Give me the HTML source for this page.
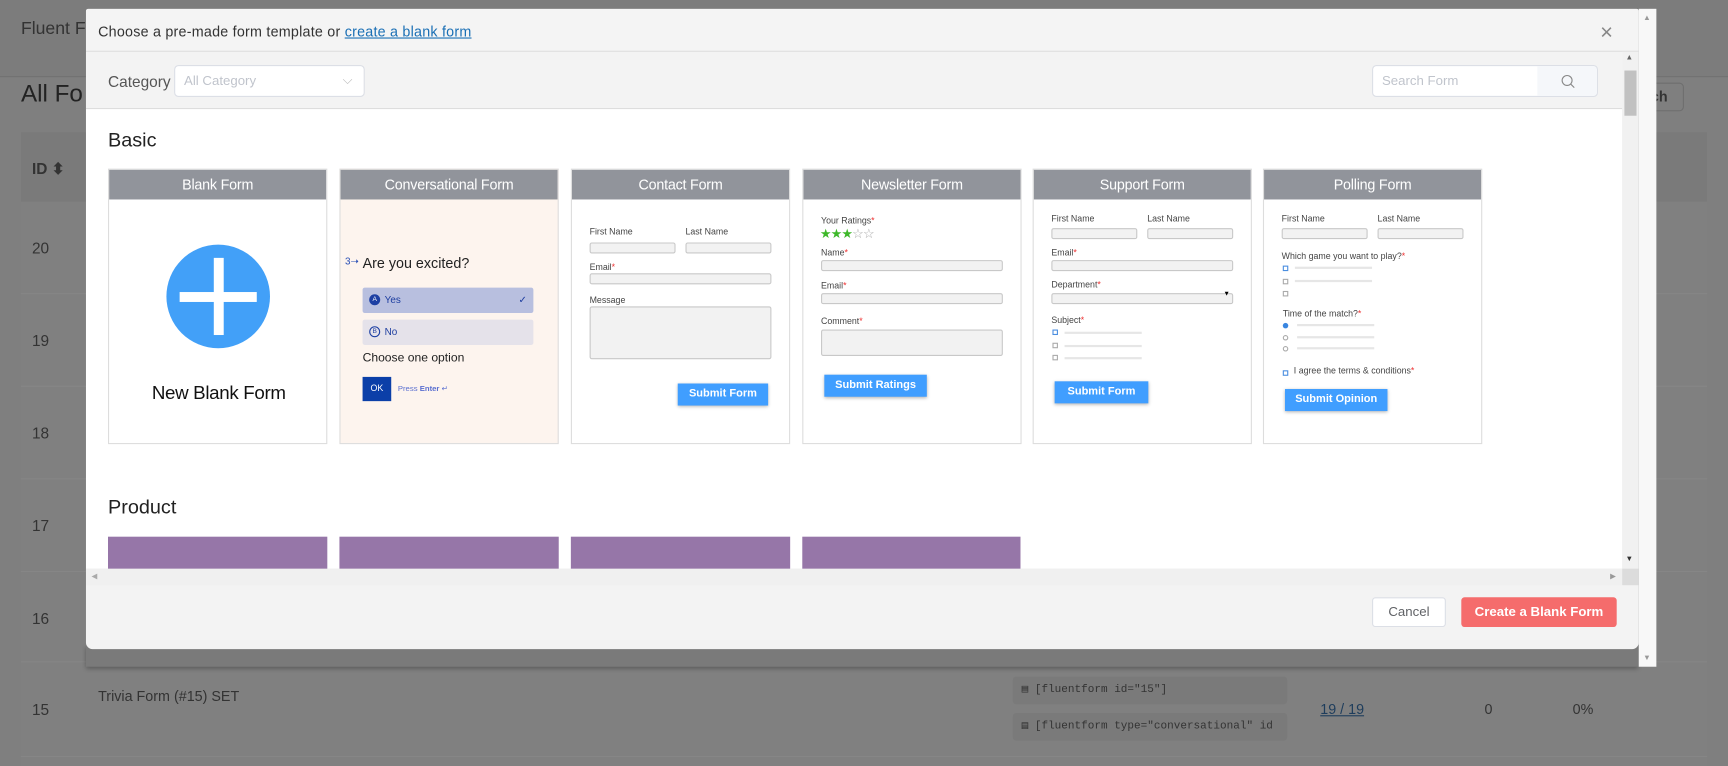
<!DOCTYPE html>
<html><head><meta charset="utf-8"><style>
*{box-sizing:border-box;margin:0;padding:0}
body{width:1728px;height:766px;overflow:hidden;background:#7f7f7f;font-family:"Liberation Sans",sans-serif}
#w{position:absolute;left:0;top:0;width:1568px;height:695px;transform:scale(1.10204);transform-origin:0 0}
.a{position:absolute}
.pt{color:#333;position:absolute}
.card{position:absolute;top:153px;width:199px;height:250px;border:1px solid #ddd;background:#fff;overflow:hidden}
.card .h{height:27px;background:#91949b;color:#fff;font-size:13px;text-align:center;line-height:27px;letter-spacing:-0.2px}
.lb{position:absolute;font-size:8px;color:#444}
.in{position:absolute;height:10px;border:1px solid #c8c8c8;border-radius:2px;background:#f2f2f2}
.ln{position:absolute;height:2px;background:#e6e6e6}
.btn{position:absolute;background:#409eff;color:#fff;font-size:10px;font-weight:bold;text-align:center;box-shadow:0 1px 3px rgba(0,0,0,.3)}
.r{color:#e33}
.cb{position:absolute;width:5px;height:5px;border:1px solid #aaa}
</style></head><body><div id="w">
<div class="a" style="left:0;top:0;width:1568px;height:70px;background:#7c7c7c;border-bottom:1px solid #727272"></div>
<div class="pt" style="left:19px;top:18px;font-size:16px;color:#333">Fluent Fo</div>
<div class="pt" style="left:19px;top:72px;font-size:22px;color:#222">All Fo</div>
<div class="a" style="left:19px;top:120px;width:1530px;height:575px;background:#808080"></div>
<div class="a" style="left:19px;top:120px;width:1530px;height:63px;background:#7a7a7a"></div>
<div class="pt" style="left:29px;top:145px;font-size:14px;font-weight:bold;color:#333">ID ⬍</div>
<div class="pt" style="left:29px;top:217px;font-size:14px">20</div>
<div class="pt" style="left:29px;top:301px;font-size:14px">19</div>
<div class="pt" style="left:29px;top:385px;font-size:14px">18</div>
<div class="pt" style="left:29px;top:469px;font-size:14px">17</div>
<div class="pt" style="left:29px;top:553px;font-size:14px">16</div>
<div class="pt" style="left:29px;top:636px;font-size:14px">15</div>
<div class="a" style="left:19px;top:266px;width:1530px;height:1px;background:#868686"></div>
<div class="a" style="left:19px;top:350px;width:1530px;height:1px;background:#868686"></div>
<div class="a" style="left:19px;top:434px;width:1530px;height:1px;background:#868686"></div>
<div class="a" style="left:19px;top:518px;width:1530px;height:1px;background:#868686"></div>
<div class="a" style="left:19px;top:600px;width:1530px;height:1px;background:#868686"></div>
<div class="a" style="left:19px;top:686px;width:1530px;height:1px;background:#868686"></div>
<div class="a" style="left:1487px;top:75px;width:41px;height:26px;border:1px solid #6e6e6e;border-radius:4px;font-size:13px;font-weight:bold;color:#333;line-height:24px;padding-left:10px">ch</div>
<div class="pt" style="left:89px;top:624px;font-size:13px">Trivia Form (#15) SET</div>
<div class="a" style="left:919px;top:614px;width:249px;height:25px;background:#7a7a7a;border-radius:3px;font:10px 'Liberation Mono',monospace;color:#333;line-height:25px;padding-left:8px">▤ [fluentform id="15"]</div>
<div class="a" style="left:919px;top:647px;width:249px;height:25px;background:#7a7a7a;border-radius:3px;font:10px 'Liberation Mono',monospace;color:#333;line-height:25px;padding-left:8px;overflow:hidden;white-space:nowrap">▤ [fluentform type="conversational" id</div>
<div class="pt" style="left:1198px;top:636px;font-size:13px;color:#1e3d5c;text-decoration:underline">19 / 19</div>
<div class="pt" style="left:1347px;top:636px;font-size:13px">0</div>
<div class="pt" style="left:1427px;top:636px;font-size:13px">0%</div>
<div class="a" style="left:78px;top:585px;width:1409px;height:20px;background:#7a7a7a;box-shadow:0 2px 4px rgba(0,0,0,.3)"></div>
<div class="a" style="left:1487px;top:8px;width:16px;height:597px;background:#f8f8f8"></div>
<div class="a" style="left:1491px;top:13px;font-size:7px;color:#999">▲</div>
<div class="a" style="left:1491px;top:594px;font-size:7px;color:#999">▼</div>
<div class="a" style="left:78px;top:8px;width:1409px;height:581px;background:#f3f3f3;border-radius:2px 2px 6px 6px;overflow:hidden">
 <div class="a" style="left:0;top:0;width:1409px;height:39px;border-bottom:1px solid #dedede;background:#f4f4f4"></div>
 <div class="a" style="left:11px;top:13px;font-size:13px;color:#333;letter-spacing:0.2px">Choose a pre-made form template or <span style="color:#1a6fb5;text-decoration:underline">create a blank form</span></div>
 <div class="a" style="left:1374px;top:11px;font-size:20px;color:#888;font-weight:300">×</div>
 <div class="a" style="left:20px;top:58px;font-size:14px;color:#555">Category</div>
 <div class="a" style="left:80px;top:51px;width:173px;height:29px;background:#fff;border:1px solid #dcdfe6;border-radius:4px;font-size:12px;color:#c0c4cc;line-height:27px;padding-left:8px">All Category<span style="position:absolute;right:10px;top:-1px;color:#bbb">⌵</span></div>
 <div class="a" style="left:1167px;top:51px;width:205px;height:29px;background:#fff;border:1px solid #dcdfe6;border-radius:4px;font-size:12px;color:#c0c4cc;line-height:27px;padding-left:8px;overflow:hidden">Search Form<div class="a" style="left:149px;top:0;width:55px;height:27px;background:#f5f7fa"><svg width="14" height="14" style="position:absolute;left:21px;top:7px"><circle cx="6" cy="6" r="4.5" fill="none" stroke="#888" stroke-width="1"/><line x1="9.5" y1="9.5" x2="12.5" y2="12.5" stroke="#888"/></svg></div></div>
 <div class="a" style="left:0;top:90px;width:1394px;height:418px;background:#fff;border-top:1px solid #ddd"></div>
 <div class="a" style="left:1394px;top:39px;width:15px;height:469px;background:#f1f1f1"></div>
 <div class="a" style="left:1397px;top:41px;font-size:7px;color:#666">▲</div>
 <div class="a" style="left:1396px;top:56px;width:11px;height:41px;background:#c1c1c1"></div>
 <div class="a" style="left:1397px;top:496px;font-size:7px;color:#333">▼</div>
 <div class="a" style="left:0;top:508px;width:1394px;height:15px;background:#f0f0f0"></div>
 <div class="a" style="left:1394px;top:508px;width:15px;height:15px;background:#dcdcdc"></div>
 <div class="a" style="left:5px;top:511px;font-size:7px;color:#aaa">◀</div>
 <div class="a" style="left:1383px;top:511px;font-size:7px;color:#999">▶</div>
 <div class="a" style="left:1167px;top:534px;width:67px;height:27px;background:#fff;border:1px solid #dcdfe6;border-radius:3px;font-size:12px;color:#606266;text-align:center;line-height:25px">Cancel</div>
 <div class="a" style="left:1248px;top:534px;width:141px;height:27px;background:#f56c6c;border-radius:3px;font-size:12px;font-weight:bold;color:#fff;text-align:center;line-height:27px">Create a Blank Form</div>
</div>
<div class="a" style="left:98px;top:117px;font-size:18px;color:#222">Basic</div>
<div class="a" style="left:98px;top:450px;font-size:18px;color:#222">Product</div>
<div class="card" style="left:98px"><div class="h">Blank Form</div>
 <div class="a" style="left:52px;top:68px;width:94px;height:94px;border-radius:50%;background:#42a0f8"></div>
 <div class="a" style="left:95px;top:80px;width:9px;height:70px;background:#fff"></div>
 <div class="a" style="left:64px;top:111px;width:70px;height:9px;background:#fff"></div>
 <div class="a" style="left:0;top:193px;width:199px;text-align:center;font-size:17px;color:#111;letter-spacing:-0.3px">New Blank Form</div></div>
<div class="card" style="left:308px;background:#fdf4ee"><div class="h">Conversational Form</div>
 <div class="a" style="left:4px;top:78px;font-size:9px;color:#2a4fb5">3➝</div>
 <div class="a" style="left:20px;top:77px;font-size:13px;color:#222">Are you excited?</div>
 <div class="a" style="left:20px;top:107px;width:155px;height:23px;background:#b8bfdf;border-radius:2px;font-size:9px;color:#1e3ea0;line-height:23px;padding-left:20px">Yes<span style="position:absolute;right:6px">✓</span><span style="position:absolute;left:6px;top:6px;width:10px;height:10px;border-radius:50%;background:#1d3fa3;color:#fff;font-size:6px;line-height:10px;text-align:center">A</span></div>
 <div class="a" style="left:20px;top:136px;width:155px;height:23px;background:#e5e2ea;border-radius:2px;font-size:9px;color:#1e3ea0;line-height:23px;padding-left:20px">No<span style="position:absolute;left:6px;top:6px;width:10px;height:10px;border-radius:50%;border:1px solid #1d3fa3;font-size:6px;line-height:8px;text-align:center">B</span></div>
 <div class="a" style="left:20px;top:165px;font-size:11px;color:#222">Choose one option</div>
 <div class="a" style="left:20px;top:188px;width:26px;height:22px;background:#0b3fa8;color:#fff;font-size:8px;text-align:center;line-height:22px">OK</div>
 <div class="a" style="left:52px;top:195px;font-size:7px;color:#5a6fd0">Press <b>Enter</b> ↵</div></div>
<div class="card" style="left:518px"><div class="h">Contact Form</div>
 <div class="lb" style="left:16px;top:52px">First Name</div><div class="lb" style="left:103px;top:52px">Last Name</div>
 <div class="in" style="left:16px;top:66px;width:78px"></div><div class="in" style="left:103px;top:66px;width:78px"></div>
 <div class="lb" style="left:16px;top:84px">Email<span class="r">*</span></div>
 <div class="in" style="left:16px;top:94px;width:165px"></div>
 <div class="lb" style="left:16px;top:114px">Message</div>
 <div class="in" style="left:16px;top:124px;width:165px;height:48px"></div>
 <div class="btn" style="left:96px;top:194px;width:82px;height:20px;line-height:20px">Submit Form</div></div>
<div class="card" style="left:728px"><div class="h">Newsletter Form</div>
 <div class="lb" style="left:16px;top:42px">Your Ratings<span class="r">*</span></div>
 <div class="a" style="left:15px;top:51px;font-size:12px;color:#3eb82a;letter-spacing:-1px">★★★<span style="color:#aaa">☆☆</span></div>
 <div class="lb" style="left:16px;top:71px">Name<span class="r">*</span></div>
 <div class="in" style="left:16px;top:82px;width:165px"></div>
 <div class="lb" style="left:16px;top:101px">Email<span class="r">*</span></div>
 <div class="in" style="left:16px;top:112px;width:165px"></div>
 <div class="lb" style="left:16px;top:133px">Comment<span class="r">*</span></div>
 <div class="in" style="left:16px;top:145px;width:165px;height:24px"></div>
 <div class="btn" style="left:19px;top:186px;width:93px;height:20px;line-height:20px">Submit Ratings</div></div>
<div class="card" style="left:937px"><div class="h">Support Form</div>
 <div class="lb" style="left:16px;top:40px">First Name</div><div class="lb" style="left:103px;top:40px">Last Name</div>
 <div class="in" style="left:16px;top:53px;width:78px"></div><div class="in" style="left:103px;top:53px;width:78px"></div>
 <div class="lb" style="left:16px;top:71px">Email<span class="r">*</span></div>
 <div class="in" style="left:16px;top:82px;width:165px"></div>
 <div class="lb" style="left:16px;top:100px">Department<span class="r">*</span></div>
 <div class="in" style="left:16px;top:112px;width:165px"><span style="position:absolute;right:2px;top:-3px;font-size:6px">▼</span></div>
 <div class="lb" style="left:16px;top:132px">Subject<span class="r">*</span></div>
 <div class="cb" style="left:17px;top:145px;border-color:#4a8ee0"></div><div class="ln" style="left:28px;top:147px;width:70px"></div>
 <div class="cb" style="left:17px;top:157px"></div><div class="ln" style="left:28px;top:159px;width:70px"></div>
 <div class="cb" style="left:17px;top:168px"></div><div class="ln" style="left:28px;top:170px;width:70px"></div>
 <div class="btn" style="left:19px;top:192px;width:85px;height:20px;line-height:20px">Submit Form</div></div>
<div class="card" style="left:1146px"><div class="h">Polling Form</div>
 <div class="lb" style="left:16px;top:40px">First Name</div><div class="lb" style="left:103px;top:40px">Last Name</div>
 <div class="in" style="left:16px;top:53px;width:78px"></div><div class="in" style="left:103px;top:53px;width:78px"></div>
 <div class="lb" style="left:16px;top:74px">Which game you want to play?<span class="r">*</span></div>
 <div class="cb" style="left:17px;top:87px;border-color:#4a8ee0"></div><div class="ln" style="left:28px;top:88px;width:70px"></div>
 <div class="cb" style="left:17px;top:99px"></div><div class="ln" style="left:28px;top:100px;width:70px"></div>
 <div class="cb" style="left:17px;top:110px"></div>
 <div class="lb" style="left:17px;top:126px">Time of the match?<span class="r">*</span></div>
 <div class="a" style="left:17px;top:139px;width:5px;height:5px;border-radius:50%;background:#3a86e0"></div><div class="ln" style="left:30px;top:140px;width:70px"></div>
 <div class="a" style="left:17px;top:150px;width:5px;height:5px;border-radius:50%;border:1px solid #aaa"></div><div class="ln" style="left:30px;top:151px;width:70px"></div>
 <div class="a" style="left:17px;top:160px;width:5px;height:5px;border-radius:50%;border:1px solid #aaa"></div><div class="ln" style="left:30px;top:161px;width:70px"></div>
 <div class="cb" style="left:17px;top:182px;border-color:#4a8ee0"></div><div class="lb" style="left:27px;top:178px">I agree the terms &amp; conditions<span class="r">*</span></div>
 <div class="btn" style="left:19px;top:199px;width:93px;height:20px;line-height:20px">Submit Opinion</div></div>
<div class="a" style="left:98px;top:487px;width:199px;height:29px;background:#9676a8"></div>
<div class="a" style="left:308px;top:487px;width:199px;height:29px;background:#9676a8"></div>
<div class="a" style="left:518px;top:487px;width:199px;height:29px;background:#9676a8"></div>
<div class="a" style="left:728px;top:487px;width:198px;height:29px;background:#9676a8"></div>
</div></body></html>
